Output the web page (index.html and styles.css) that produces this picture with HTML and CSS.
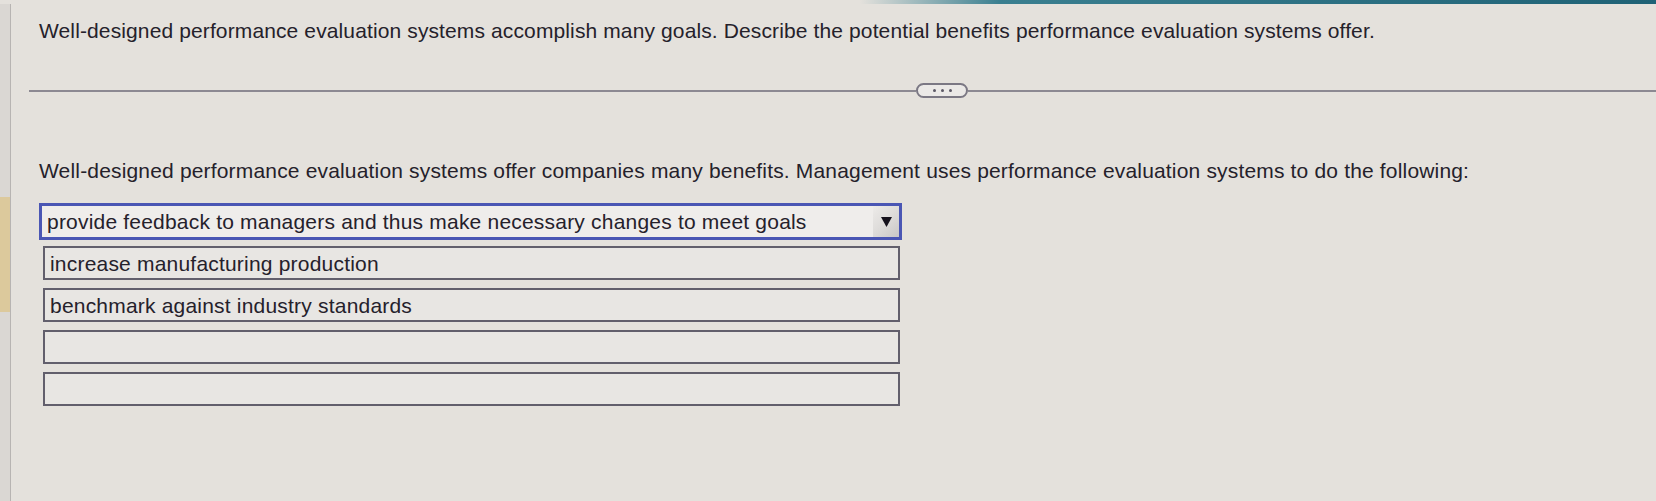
FILE: index.html
```
<!DOCTYPE html>
<html>
<head>
<meta charset="utf-8">
<link rel="stylesheet" href="styles.css">
</head>
<body>
<div class="topbar"></div>
<div class="page">
  <div class="gutter"><div class="flag"></div></div>
  <div class="content">
    <p class="question">Well-designed performance evaluation systems accomplish many goals. Describe the potential benefits performance evaluation systems offer.</p>
    <div class="divider">
      <div class="line left"></div>
      <div class="pill"><span></span><span></span><span></span></div>
      <div class="line right"></div>
    </div>
    <p class="prompt">Well-designed performance evaluation systems offer companies many benefits. Management uses performance evaluation systems to do the following:</p>
    <div class="answers">
      <div class="select">
        <span class="sel-text">provide feedback to managers and thus make necessary changes to meet goals</span>
        <span class="arrow"><svg width="11" height="10" viewBox="0 0 11 10"><path d="M0 0 H11 L5.5 10 Z" fill="#15121c"/></svg></span>
      </div>
      <div class="box">increase manufacturing production</div>
      <div class="box">benchmark against industry standards</div>
      <div class="box"></div>
      <div class="box"></div>
    </div>
  </div>
</div>
</body>
</html>
```
FILE: styles.css
```
html, body {
  margin: 0;
  padding: 0;
  width: 1656px;
  height: 501px;
  overflow: hidden;
  background: #e4e1dc;
  font-family: "Liberation Sans", Arial, sans-serif;
  color: #25212b;
}
.topbar {
  height: 4px;
  background: linear-gradient(to right, rgba(47,116,134,0) 0px, rgba(47,116,134,0) 860px, #3a7f90 1000px, #1f6276 1656px);
}
.page {
  display: flex;
  height: 497px;
}
.gutter {
  width: 10px;
  flex: none;
  background: #dad7d3;
  border-right: 1px solid #b7b4b2;
  padding-top: 193px;
}
.flag {
  height: 115px;
  background: #dcc99c;
}
.content {
  flex: 1;
  padding-left: 28px;
}
.question {
  margin: 0;
  padding-top: 15px;
  font-size: 21px;
  line-height: 24px;
  letter-spacing: 0.12px;
}
.divider {
  display: flex;
  align-items: center;
  margin-top: 40px;
  margin-left: -10px;
  height: 15px;
}
.line {
  height: 2px;
  background: #8c8992;
}
.line.left { width: 887px; }
.line.right { flex: 1; }
.pill {
  width: 48px;
  height: 11px;
  border: 2px solid #7b7884;
  border-radius: 8px;
  background: #ebe9e7;
  display: flex;
  justify-content: center;
  align-items: center;
  gap: 5px;
}
.pill span {
  width: 3px;
  height: 3px;
  border-radius: 50%;
  background: #5c5966;
}
.prompt {
  margin: 0;
  margin-top: 61px;
  font-size: 21px;
  line-height: 24px;
  letter-spacing: 0.17px;
}
.answers {
  margin-top: 20px;
  display: flex;
  flex-direction: column;
  width: 863px;
}
.select {
  box-sizing: border-box;
  display: flex;
  align-items: center;
  height: 37px;
  border: 3px solid #4a56b4;
  background: #efedeb;
  font-size: 21px;
  letter-spacing: 0.2px;
  padding-left: 5px;
  padding-right: 0;
  margin-bottom: 6px;
}
.sel-text { flex: 1; }
.arrow {
  width: 26px;
  height: 31px;
  display: flex;
  align-items: center;
  justify-content: center;
  background: linear-gradient(135deg, #edebe9 0%, #dcdad8 55%, #c9c7c6 100%);
}
.box {
  box-sizing: border-box;
  margin-left: 4px;
  width: 857px;
  height: 34px;
  border: 2px solid #625f6c;
  background: #e8e6e3;
  font-size: 21px;
  letter-spacing: 0.2px;
  line-height: 32px;
  padding-left: 5px;
  margin-bottom: 8px;
}
```
